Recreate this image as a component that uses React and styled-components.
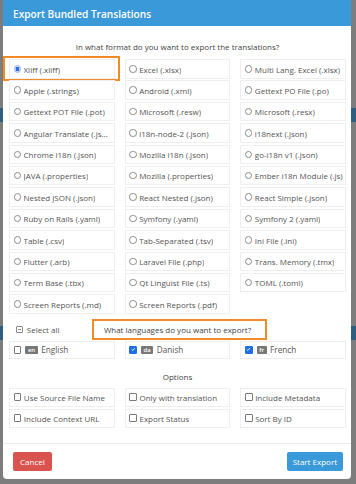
import React from "react";
import styled, { createGlobalStyle, css } from "styled-components";

const Global = createGlobalStyle`
  html, body { margin: 0; padding: 0; }
  body {
    width: 356px;
    height: 484px;
    overflow: hidden;
    font-family: "Open Sans", "Noto Sans", sans-serif;
    background:
      linear-gradient(to bottom, transparent 108px, #2f5f80 108px, #2f5f80 122px, transparent 122px),
      linear-gradient(to bottom, transparent 326px, #2f5f80 326px, #2f5f80 340px, transparent 340px),
      #7d7d7d;
  }
`;

const Overlay = styled.div`
  width: 356px;
  height: 484px;
  display: flex;
  justify-content: flex-start;
  padding-left: 3px;
  box-sizing: border-box;
`;

const Dialog = styled.div`
  width: 348px;
  height: 479px;
  background: #fff;
  border-radius: 0 0 4px 4px;
  display: flex;
  flex-direction: column;
  overflow: hidden;
`;

const Header = styled.div`
  height: 26px;
  flex: none;
  background: #3a99d8;
  color: #fff;
  font-size: 10.1px;
  font-weight: 600;
  display: flex;
  align-items: center;
  padding-left: 10px;
  padding-top: 1px;
  box-sizing: border-box;
`;

const Body = styled.div`
  padding: 0 5px 0 6px;
  display: flex;
  flex-direction: column;
  flex: 1;
`;

const Heading = styled.div`
  text-align: center;
  font-size: 8px;
  line-height: 10px;
  color: #444;
  margin-top: ${(p) => p.$mt}px;
  margin-bottom: ${(p) => p.$mb}px;
`;

const Grid = styled.div`
  display: grid;
  grid-template-columns: repeat(3, minmax(0, 1fr));
  column-gap: 10px;
  row-gap: ${(p) => p.$gap}px;
  grid-auto-rows: ${(p) => p.$row}px;
`;

const Cell = styled.label`
  position: relative;
  display: flex;
  align-items: center;
  gap: 2.5px;
  padding-left: 3.5px;
  padding-right: 2px;
  border: 1px solid #efefef;
  font-size: 8px;
  color: #555;
  white-space: nowrap;
  overflow: visible;
  min-width: 0;
`;

const CellText = styled.span`
  overflow: hidden;
  text-overflow: ellipsis;
  padding-top: 0.5px;
  max-width: ${(p) => (p.$max ? `${p.$max}px` : "none")};
`;

const Highlight = styled.span`
  position: absolute;
  left: -7px;
  right: -6px;
  top: -4px;
  bottom: -3px;
  border: 2px solid #f08c25;
  pointer-events: none;
`;

const Radio = styled.span`
  flex: none;
  width: 5.5px;
  height: 5.5px;
  border-radius: 50%;
  border: 0.8px solid #8a8a8a;
  background: #fff;
  ${(p) =>
    p.$checked &&
    css`
      border-color: #9ab8e6;
      background: radial-gradient(circle, #2d6fe0 0 1.8px, #c7d9f5 2.1px);
    `}
`;

const Box = styled.span`
  flex: none;
  width: 5.8px;
  height: 5.8px;
  border-radius: 1px;
  border: 0.8px solid #7a7a7a;
  background: #fff;
  display: flex;
  align-items: center;
  justify-content: center;
  ${(p) =>
    p.$checked &&
    css`
      border-color: #1e6ee6;
      background: #1e6ee6;
    `}
`;

const SelectLine = styled.div`
  position: relative;
  height: 10px;
  margin-top: 11px;
  margin-bottom: 6px;
  display: flex;
  align-items: center;
  justify-content: center;
  font-size: 8px;
  color: #444;
`;

const SelectAll = styled.span`
  position: absolute;
  left: 7px;
  top: 0;
  height: 10px;
  display: flex;
  align-items: center;
  gap: 4px;
  color: #555;
`;

const MinusBox = styled.span`
  width: 4.8px;
  height: 4.8px;
  border: 0.8px solid #8a8a8a;
  border-radius: 1px;
  position: relative;
  &::after {
    content: "";
    position: absolute;
    left: 1px;
    right: 1px;
    top: 2px;
    height: 0.8px;
    background: #8a8a8a;
  }
`;

const LangTitle = styled.span`
  position: relative;
`;

const TitleHighlight = styled.span`
  position: absolute;
  left: -12px;
  right: -16px;
  top: -5px;
  bottom: -5px;
  border: 2px solid #f08c25;
  pointer-events: none;
`;

const Badge = styled.span`
  flex: none;
  background: #777;
  color: #fff;
  font-size: 6px;
  font-weight: 600;
  border-radius: 1px;
  height: 8.5px;
  padding: 0 2.6px;
  display: flex;
  align-items: center;
  margin-left: 1.5px;
  margin-right: 1px;
`;

const LangText = styled.span`
  font-size: 8.2px;
  color: #555;
`;

const Footer = styled.div`
  margin-top: auto;
  border-top: 1px solid #ececec;
  height: 36px;
  display: flex;
  align-items: flex-start;
  justify-content: space-between;
  padding: 8px 8px 0 10px;
  box-sizing: border-box;
`;

const Button = styled.button`
  height: 19px;
  border: none;
  border-radius: 2px;
  color: #fff;
  font-family: "Open Sans", "Noto Sans", sans-serif;
  font-size: 8px;
  padding: 0 ${(p) => p.$px}px;
  background: ${(p) => p.$bg};
  cursor: pointer;
`;

const Check = () => (
  <svg width="4.6" height="4.6" viewBox="0 0 10 10">
    <path d="M1.5 5.2 L4 7.6 L8.6 2.4" fill="none" stroke="#fff" strokeWidth="2" />
  </svg>
);

const formats = [
  "Xliff (.xliff)", "Excel (.xlsx)", "Multi Lang. Excel (.xlsx)",
  "Apple (.strings)", "Android (.xml)", "Gettext PO File (.po)",
  "Gettext POT File (.pot)", "Microsoft (.resw)", "Microsoft (.resx)",
  "Angular Translate (.json)", "i18n-node-2 (.json)", "i18next (.json)",
  "Chrome i18n (.json)", "Mozilla i18n (.json)", "go-i18n v1 (.json)",
  "JAVA (.properties)", "Mozilla (.properties)", "Ember i18n Module (.js)",
  "Nested JSON (.json)", "React Nested (.json)", "React Simple (.json)",
  "Ruby on Rails (.yaml)", "Symfony (.yaml)", "Symfony 2 (.yaml)",
  "Table (.csv)", "Tab-Separated (.tsv)", "Ini File (.ini)",
  "Flutter (.arb)", "Laravel File (.php)", "Trans. Memory (.tmx)",
  "Term Base (.tbx)", "Qt Linguist File (.ts)", "TOML (.toml)",
  "Screen Reports (.md)", "Screen Reports (.pdf)",
];

const langs = [
  { code: "en", name: "English", checked: false },
  { code: "da", name: "Danish", checked: true },
  { code: "fr", name: "French", checked: true },
];

const options = [
  "Use Source File Name", "Only with translation", "Include Metadata",
  "Include Context URL", "Export Status", "Sort By ID",
];

export default function App() {
  return (
    <>
      <Global />
      <Overlay>
        <Dialog>
          <Header>Export Bundled Translations</Header>
          <Body>
            <Heading $mt={16} $mb={7}>
              In what format do you want to export the translations?
            </Heading>
            <Grid $row={19.5} $gap={1.9}>
              {formats.map((f, i) => (
                <Cell key={f}>
                  <Radio $checked={i === 0} />
                  <CellText $max={f.startsWith("Angular") ? 93 : 0}>{f}</CellText>
                  {i === 0 && <Highlight />}
                </Cell>
              ))}
            </Grid>
            <SelectLine>
              <SelectAll>
                <MinusBox />
                Select all
              </SelectAll>
              <LangTitle>
                What languages do you want to export?
                <TitleHighlight />
              </LangTitle>
            </SelectLine>
            <Grid $row={18} $gap={2}>
              {langs.map((l) => (
                <Cell key={l.code}>
                  <Box $checked={l.checked}>{l.checked && <Check />}</Box>
                  <Badge>{l.code}</Badge>
                  <LangText>{l.name}</LangText>
                </Cell>
              ))}
            </Grid>
            <Heading $mt={13} $mb={6}>
              Options
            </Heading>
            <Grid $row={19} $gap={2}>
              {options.map((o) => (
                <Cell key={o}>
                  <Box />
                  <CellText>{o}</CellText>
                </Cell>
              ))}
            </Grid>
          </Body>
          <Footer>
            <Button $bg="#d9534f" $px={7}>Cancel</Button>
            <Button $bg="#3a99d8" $px={6}>Start Export</Button>
          </Footer>
        </Dialog>
      </Overlay>
    </>
  );
}
